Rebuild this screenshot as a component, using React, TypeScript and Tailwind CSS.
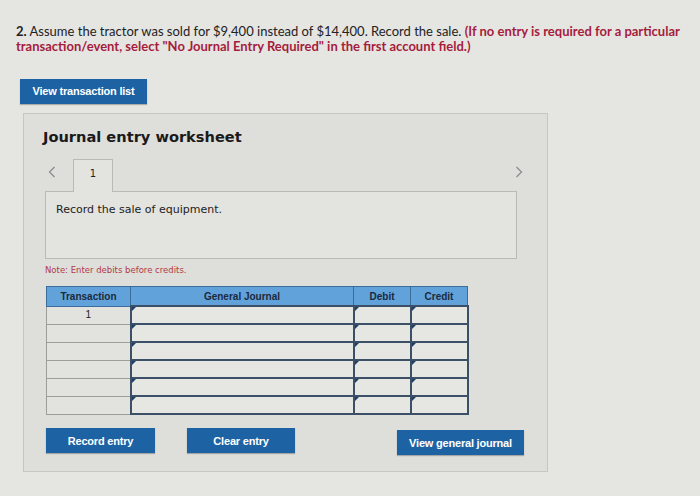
import React from "react";

const rows = [1, 2, 3, 4, 5, 6];

function Flag() {
  return (
    <span className="absolute left-0 top-0 w-0 h-0 border-t-[4px] border-t-[#1f3f63] border-r-[4px] border-r-transparent" />
  );
}

function Button({ label, className }: { label: string; className?: string }) {
  return (
    <button
      className={
        "h-[25px] bg-[#1d63a4] text-white text-[11px] font-bold tracking-[-0.2px] shadow-[0_1px_1px_rgba(0,0,0,0.25)] [font-family:'Liberation_Sans',Arial,sans-serif] " +
        (className ?? "")
      }
    >
      {label}
    </button>
  );
}

export default function App() {
  return (
    <div className="w-[700px] h-[496px] overflow-hidden bg-[#e5e5e2] pt-[24px] pl-[16px] text-[#222]">
      {/* Question */}
      <div className="w-[680px] text-[13px] leading-[15px] [font-family:Lato,'Liberation_Sans',sans-serif]">
        <div>
          <span className="font-bold">2.</span> Assume the tractor was sold for $9,400 instead of $14,400. Record the sale.{" "}
          <span className="font-bold text-[#a51d3d]">(If no entry is required for a particular</span>
        </div>
        <div className="font-bold text-[#a51d3d]">
          transaction/event, select "No Journal Entry Required" in the first account field.)
        </div>
      </div>

      <Button label="View transaction list" className="mt-[25px] ml-[4px] w-[127px]" />

      {/* Worksheet panel */}
      <div className="mt-[9px] ml-[7px] w-[525px] h-[359px] border border-[#c6c6c3] bg-[#dededb] pl-[21px] [font-family:'DejaVu_Sans',Verdana,sans-serif]">
        <h2 className="mt-[14px] ml-[-2px] text-[14.6px] leading-[18px] font-bold text-[#1a1a1a]">Journal entry worksheet</h2>

        {/* Tabs */}
        <div className="mt-[12px] w-[472px] flex items-end relative h-[33px]">
          <svg className="absolute left-[3px] top-[8px]" width="8" height="12" viewBox="0 0 8 12" fill="none">
            <path d="M6.5 1 L1.5 6 L6.5 11" stroke="#8a8a8a" strokeWidth="1.2" />
          </svg>
          <div className="ml-[28px] w-[40px] h-[33px] border border-b-0 border-[#b9b9b6] bg-[#e3e3e0] text-[10px] text-center pt-[6px] relative z-10 -mb-px">
            1
          </div>
          <svg className="absolute right-[-6px] top-[8px]" width="8" height="12" viewBox="0 0 8 12" fill="none">
            <path d="M1.5 1 L6.5 6 L1.5 11" stroke="#8a8a8a" strokeWidth="1.2" />
          </svg>
        </div>
        <div className="w-[472px] h-[68px] border border-[#b9b9b6] bg-[#e3e3e0] pl-[10px] pt-[10px] text-[11px]">
          Record the sale of equipment.
        </div>

        <p className="mt-[5px] text-[8.5px] text-[#b23a48]">Note: Enter debits before credits.</p>

        {/* Table */}
        <table className="mt-[9px] ml-[1px] border-collapse text-[10px] [font-family:'Liberation_Sans',Arial,sans-serif]">
          <thead>
            <tr className="h-[20px] bg-[#62a2db] text-[#1b2a3c] font-bold">
              <th className="w-[84px] border border-[#3c6c9a] font-bold">Transaction</th>
              <th className="w-[223px] border border-[#3c6c9a] font-bold">General Journal</th>
              <th className="w-[57px] border border-[#3c6c9a] font-bold">Debit</th>
              <th className="w-[57px] border border-[#3c6c9a] font-bold">Credit</th>
            </tr>
          </thead>
          <tbody>
            {rows.map((r) => (
              <tr key={r} className="h-[18px]">
                <td className="border border-[#9d9d9b] bg-[#e2e2df] text-center align-middle text-[10px] pb-[2px]">{r === 1 ? "1" : ""}</td>
                <td className="relative border-2 border-[#3b4f66] bg-[#e6e6e3]">
                  <Flag />
                </td>
                <td className="relative border-2 border-[#3b4f66] bg-[#e6e6e3]">
                  <Flag />
                </td>
                <td className="relative border-2 border-[#3b4f66] bg-[#e6e6e3]">
                  <Flag />
                </td>
              </tr>
            ))}
          </tbody>
        </table>

        {/* Actions */}
        <div className="mt-[13px] ml-[1px] flex items-start">
          <Button label="Record entry" className="w-[109px]" />
          <Button label="Clear entry" className="ml-[32px] w-[108px]" />
          <Button label="View general journal" className="ml-[102px] mt-[2px] w-[127px]" />
        </div>
      </div>
    </div>
  );
}
